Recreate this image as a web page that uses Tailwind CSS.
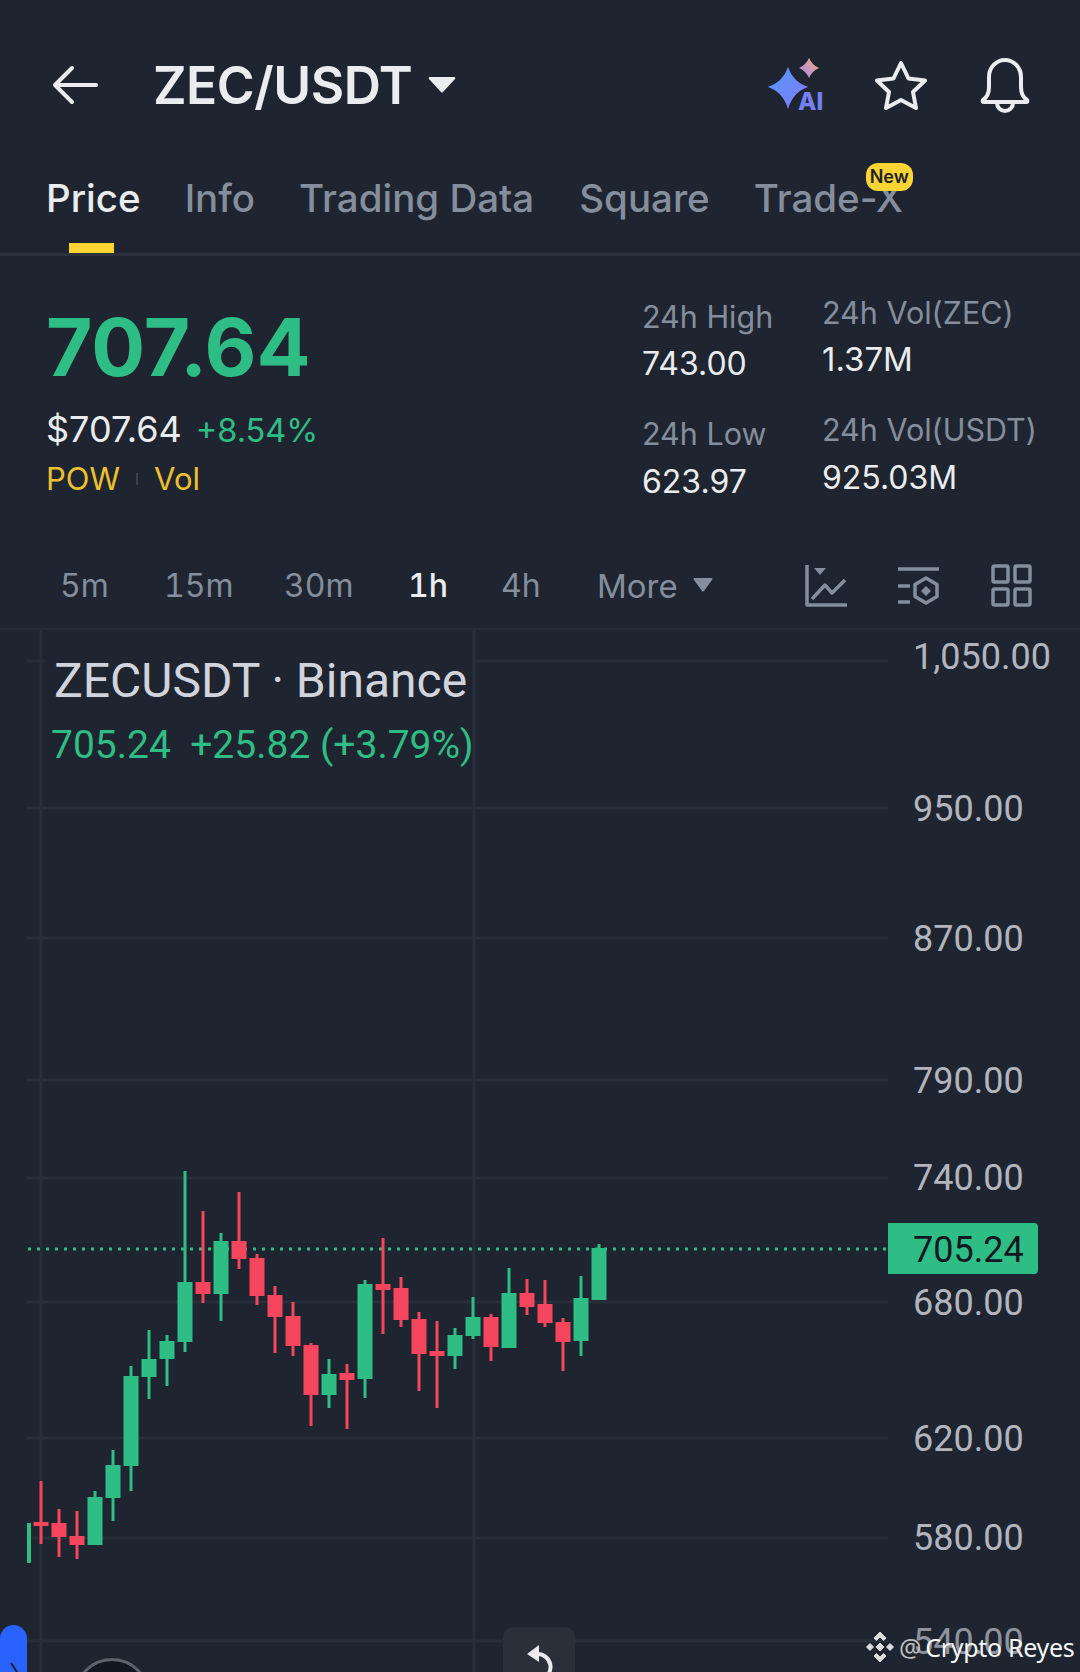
<!doctype html>
<html lang="en">
<head>
  <meta charset="UTF-8">
  <script src="https://cdn.jsdelivr.net/npm/@tailwindcss/browser@4"></script>
  <title>ZEC/USDT</title>
</head>
<body>
<div id="app" class="relative flex h-[1672px] w-[1080px] flex-col overflow-hidden bg-[#1f2530] font-['Inter',sans-serif] text-[#eaecef]">

  <!-- Header -->
  <div class="flex h-[170px] flex-none items-center pl-[52px] pr-[50px]">
    <svg width="46" height="40" viewBox="0 0 46 40" fill="none" stroke="#eaecef" stroke-width="4" stroke-linecap="round" stroke-linejoin="round"><path d="M44 20H3M20 3 3 20l17 17"></path></svg>
    <div class="ml-[55px] mt-[2px] text-[51.500px] font-semibold tracking-[-0.5px]">ZEC/USDT</div>
    <svg class="ml-[16px]" width="28" height="18" viewBox="0 0 28 18" fill="#eaecef"><path d="M2 1h24q2 0 1 2L15 16q-1 1-2 0L1 3Q0 1 2 1z"></path></svg>
    <div class="ml-auto flex items-center">
      <!-- AI sparkle -->
      <div class="relative h-[56px] w-[58px]">
        <svg class="absolute inset-0" width="58" height="56" viewBox="0 0 58 56">
          <defs>
            <linearGradient id="aiBig" x1="0" y1="0" x2="1" y2="1"><stop offset="0" stop-color="#4f9bff"></stop><stop offset="1" stop-color="#8678f2"></stop></linearGradient>
            <linearGradient id="aiSmall" x1="0" y1="1" x2="1" y2="0"><stop offset="0" stop-color="#a58bf0"></stop><stop offset="1" stop-color="#f0a878"></stop></linearGradient>
          </defs>
          <path d="M20 10Q25 25 40 30Q25 35 20 52Q15 35 0 30Q15 25 20 10z" fill="url(#aiBig)"></path>
          <path d="M41 1Q44 8 51 11Q44 14 41 21Q38 14 31 11Q38 8 41 1z" fill="url(#aiSmall)"></path>
        </svg>
        <span class="absolute left-[30px] top-[33px] text-[24px] leading-[24px] font-extrabold text-[#7480f0]">AI</span>
      </div>
      <svg class="ml-[49px]" width="52" height="50" viewBox="0 0 52 50" fill="none" stroke="#eaecef" stroke-width="4" stroke-linejoin="round"><path d="M26 3l7.500 15.500L50 20.500 38 32l3 16-15-8-15 8 3-16L2 20.500 18.500 18.500z"></path></svg>
      <svg class="ml-[53px]" width="50" height="56" viewBox="0 0 50 56" fill="none" stroke="#eaecef" stroke-width="4" stroke-linejoin="round" stroke-linecap="round"><path d="M3 43q6-4 6-13V20a16 17 0 0 1 32 0v10q0 9 6 13 1 2-1 2H4q-2 0-1-2z"></path><path d="M17 46a8 8 0 0 0 16 0"></path></svg>
    </div>
  </div>

  <!-- Tabs -->
  <div class="flex h-[86px] flex-none items-start gap-[44px] border-b-[3px] border-[#2c323d] pl-[46px] pt-[6px] text-[38.500px] leading-[44px] font-medium text-[#848e9c]">
    <div class="relative h-[78px] text-[#eaecef]">Price<div class="absolute left-[23px] top-[67px] h-[10px] w-[45px] bg-[#fcd535]"></div></div>
    <div>Info</div>
    <div>Trading Data</div>
    <div class="ml-[1px]">Square</div>
    <div class="relative">Trade-X<span class="absolute left-[112px] top-[-13px] flex h-[28px] w-[47px] items-center justify-center rounded-[12px] bg-[#fcd535] text-[18px] font-semibold text-[#1e2329]">New</span></div>
  </div>

  <!-- Price and 24h stats -->
  <div class="flex h-[299px] flex-none pl-[46px]">
    <div class="w-[596px] pt-[51px]">
      <div class="text-[80px] leading-[80px] font-bold text-[#2ebd85]">707.64</div>
      <div class="mt-[23px] flex items-baseline gap-[14px] leading-[38px]">
        <span class="text-[36px]">$707.64</span><span class="text-[32.500px] text-[#2ebd85]">+8.54%</span>
      </div>
      <div class="mt-[11px] flex items-center text-[31px] leading-[36px] text-[#ecc02e]">
        <span>POW</span><span class="mx-[16px] h-[12px] w-[2px] bg-[#3a404b]"></span><span>Vol</span>
      </div>
    </div>
    <div class="w-[180px] pt-[41px] leading-[40px]">
      <div class="text-[30.500px] text-[#848e9c]">24h High</div>
      <div class="mt-[7px] text-[32px]">743.00</div>
      <div class="mt-[30px] text-[30.500px] text-[#848e9c]">24h Low</div>
      <div class="mt-[8px] text-[32px]">623.97</div>
    </div>
    <div class="pt-[37px] leading-[40px]">
      <div class="text-[30.500px] text-[#848e9c]">24h Vol(ZEC)</div>
      <div class="mt-[6px] text-[33px]">1.37M</div>
      <div class="mt-[31px] text-[30.500px] text-[#848e9c]">24h Vol(USDT)</div>
      <div class="mt-[8px] text-[32px]">925.03M</div>
    </div>
  </div>

  <!-- Interval bar -->
  <div class="flex h-[75px] flex-none items-start border-b-2 border-[#272d38] pl-[60px] pt-[11px] text-[32px] leading-[40px] text-[#848e9c] tabular-nums">
    <span class="w-[104px]">5m</span>
    <span class="w-[120px]">15m</span>
    <span class="w-[124px]">30m</span>
    <span class="w-[93px] font-medium text-[#eaecef]">1h</span>
    <span class="w-[96px]">4h</span>
    <span class="text-[33px]">More</span>
    <svg class="ml-[15px] mt-[12px]" width="20" height="14" viewBox="0 0 20 14" fill="#848e9c"><path d="M1 0h18q1 0 0 2L11 13q-1 1-2 0L1 2Q0 0 1 0z"></path></svg>
    <svg class="ml-[92px] mt-[-3px]" width="44" height="44" viewBox="0 0 44 44" fill="none" stroke="#848e9c" stroke-width="3.500" stroke-linejoin="round"><path d="M2 2v40h40"></path><path d="M7 36l13-14 7 8 13-13"></path><path d="M9 5h12l-6 7z" fill="#848e9c" stroke="none"></path></svg>
    <svg class="ml-[48px] mt-[-3px]" width="44" height="46" viewBox="0 0 44 46" fill="none" stroke="#848e9c" stroke-width="3.500" stroke-linejoin="round"><path d="M1 6h41M1 23h12M1 39h12"></path><path d="M29 15l11 6.500v12L29 40l-11-6.500v-12z"></path><path d="M29 23l5 5-5 5-5-5z" fill="#848e9c" stroke="none"></path></svg>
    <svg class="ml-[50px] mt-[-3px]" width="42" height="44" viewBox="0 0 42 44" fill="none" stroke="#848e9c" stroke-width="3.500"><rect x="2" y="3" width="15" height="16" rx="1.500"></rect><rect x="24" y="3" width="15" height="16" rx="1.500"></rect><rect x="2" y="26" width="15" height="16" rx="1.500"></rect><rect x="24" y="26" width="15" height="16" rx="1.500"></rect></svg>
  </div>

  <!-- Chart, everything in here sits on the chart's own canvas -->
  <div class="relative flex-1 font-['Roboto',sans-serif]">
    <svg id="chart" class="absolute left-0 top-0" width="1080" height="1042" viewBox="0 630 1080 1042"></svg>

    <!-- legend blocks out the grid behind it -->
    <div class="absolute left-[44px] top-[21px] w-[428px] bg-[#1f2530] pl-[10px] text-[48px] leading-[60px] text-[#d1d4dc]">ZECUSDT · Binance</div>
    <div class="absolute left-[51px] top-[90px] whitespace-pre text-[39px] leading-[50px] text-[#2ebd85]">705.24  +25.82 (+3.79%)</div>

    <div class="absolute left-[913px] top-[3px] text-[36px] leading-[48px] text-[#b2b5be]">1,050.00</div>
    <div class="absolute left-[913px] top-[155px] text-[36px] leading-[48px] text-[#b2b5be]">950.00</div>
    <div class="absolute left-[913px] top-[285px] text-[36px] leading-[48px] text-[#b2b5be]">870.00</div>
    <div class="absolute left-[913px] top-[427px] text-[36px] leading-[48px] text-[#b2b5be]">790.00</div>
    <div class="absolute left-[913px] top-[524px] text-[36px] leading-[48px] text-[#b2b5be]">740.00</div>
    <div class="absolute left-[913px] top-[649px] text-[36px] leading-[48px] text-[#b2b5be]">680.00</div>
    <div class="absolute left-[913px] top-[785px] text-[36px] leading-[48px] text-[#b2b5be]">620.00</div>
    <div class="absolute left-[913px] top-[884px] text-[36px] leading-[48px] text-[#b2b5be]">580.00</div>
    <div class="absolute left-[913px] top-[988px] text-[36px] leading-[48px] text-[#8f939d]">540.00</div>

    <div class="absolute left-[888px] top-[593px] flex h-[51px] w-[150px] items-center rounded-r-[4px] bg-[#2ebd85] pl-[25px] pt-[3px] text-[36px] text-[#131722]">705.24</div>

    <!-- side handle, reset button, circle -->
    <div class="absolute left-0 top-[995px] flex h-[60px] w-[27px] items-end justify-center rounded-t-[14px] bg-[#2962ff]">
      <svg width="10" height="26" viewBox="0 0 10 26" fill="none" stroke="#1f2530" stroke-width="2"><path d="M2 4l6 9-6 9"></path></svg>
    </div>
    <div class="absolute left-[74px] top-[1028px] h-[76px] w-[76px] rounded-full border-[3px] border-[#5d616b] bg-[#131722]"></div>
    <div class="absolute left-[503px] top-[997px] flex h-[60px] w-[72px] justify-center rounded-t-[10px] bg-[#2a2f3a] pt-[18px]">
      <svg width="36" height="40" viewBox="0 0 36 40" fill="none" stroke="#eaecef" stroke-width="4"><path d="M16 9A13 13 0 1 1 5 28"></path><path d="M18 0v17L6 9z" fill="#eaecef" stroke="none"></path></svg>
    </div>

    <!-- watermark -->
    <div class="absolute left-[866px] top-[1001px] flex items-center whitespace-nowrap font-['Noto_Sans',sans-serif] text-[25px] leading-[32px] tracking-[-0.3px] text-[#f5f5f5]">
      <svg width="28" height="30" viewBox="0 0 28 30" fill="#dcdcdc" stroke="#dcdcdc" stroke-width="1"><path d="M14 0l6 6-2.500 2.500L14 5 10.500 8.500 8 6zM14 30l-6-6 2.500-2.500L14 25l3.500-3.500L20 24zM4 11.500 7.500 15 4 18.500 .5 15zM24 11.500 27.500 15 24 18.500 20.500 15zM14 11l4 4-4 4-4-4z"></path></svg>
      <span class="ml-[5px] text-[#bdbdbd]">@</span><span class="ml-[4px]">Crypto Reyes</span>
    </div>
  </div>
</div>

<script>
  // page-y coordinates: [x, wickTop, wickBottom, bodyTop, bodyBottom, up]
  const candles = [
    [41,1481,1544,1522,1526,0],[59,1509,1557,1523,1537,0],[77,1511,1559,1536,1545,0],
    [95,1491,1545,1497,1545,1],[113,1450,1521,1465,1498,1],[131,1366,1491,1376,1466,1],
    [149,1330,1399,1359,1377,1],[167,1335,1386,1341,1359,1],[185,1171,1352,1282,1342,1],
    [203,1211,1303,1282,1294,0],[221,1233,1321,1241,1294,1],[239,1192,1269,1241,1259,0],
    [257,1254,1305,1258,1296,0],[275,1286,1353,1295,1317,0],[293,1302,1356,1316,1346,0],
    [311,1343,1426,1345,1395,0],[329,1359,1408,1374,1395,1],[347,1364,1429,1373,1380,0],
    [365,1280,1398,1284,1379,1],[383,1238,1334,1284,1290,0],[401,1277,1327,1288,1320,0],
    [419,1312,1391,1319,1354,0],[437,1321,1408,1351,1356,0],[455,1328,1369,1335,1356,1],
    [473,1297,1339,1317,1336,1],[491,1314,1361,1317,1347,0],[509,1268,1348,1293,1348,1],
    [527,1279,1315,1293,1307,0],[545,1280,1327,1304,1323,0],[563,1318,1371,1322,1342,0],
    [581,1276,1356,1298,1341,1],[599,1244,1300,1248,1300,1]
  ];
  const gridY = [661,808,938,1080,1178,1302,1438,1538,1641];
  const svg = document.getElementById('chart');
  function add(tag, attrs) {
    const el = document.createElementNS('http://www.w3.org/2000/svg', tag);
    for (const k in attrs) el.setAttribute(k, attrs[k]);
    svg.appendChild(el);
  }
  gridY.forEach(y => add('rect', {x:27, y:y-1.5, width:861, height:3, fill:'#292e39'}));
  add('rect', {x:39.5, y:630, width:3, height:1042, fill:'#292e39'});
  add('rect', {x:472.5, y:630, width:3, height:1042, fill:'#292e39'});
  add('line', {x1:28, x2:888, y1:1249, y2:1249, stroke:'#2ebd85', 'stroke-width':3, 'stroke-dasharray':'3 6'});
  add('rect', {x:27, y:1523, width:4, height:40, fill:'#2ebd85'});
  candles.forEach(([x,wt,wb,bt,bb,up]) => {
    const c = up ? '#2ebd85' : '#f6465d';
    add('rect', {x:x-1.5, y:wt, width:3, height:wb-wt, fill:c});
    add('rect', {x:x-7.5, y:bt, width:15, height:bb-bt, fill:c});
  });
</script>
</body>
</html>
